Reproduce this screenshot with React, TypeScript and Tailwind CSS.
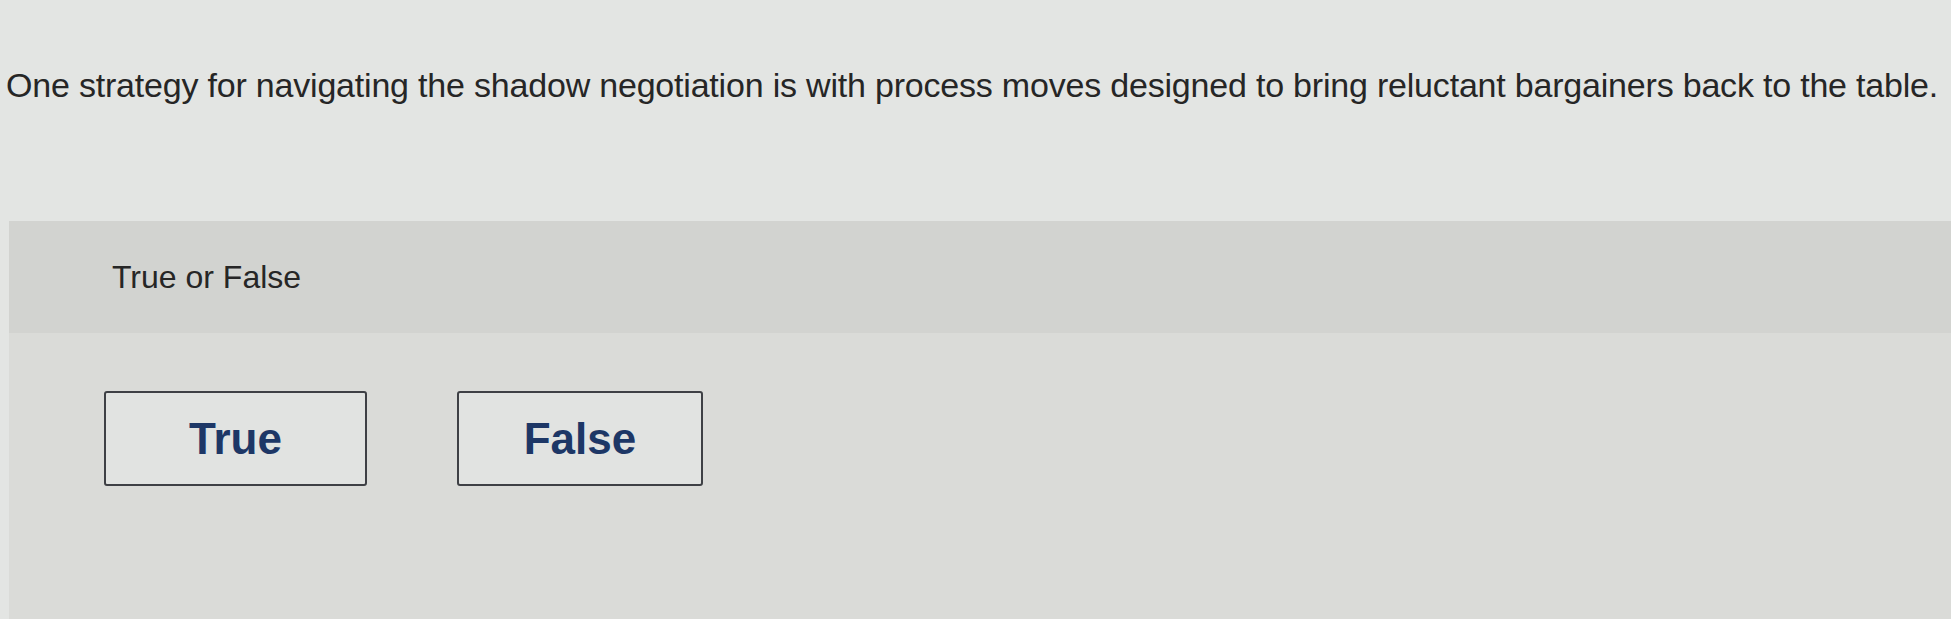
import React from 'react';

const choices = [
  { label: 'True', width: 'w-[263px]' },
  { label: 'False', width: 'w-[246px]' },
];

export default function App() {
  return (
    <div className="h-[619px] w-full overflow-hidden bg-[#e3e5e3] font-['Liberation_Sans',Arial,sans-serif] text-[#262626]">
      <p className="whitespace-nowrap pl-[6px] pt-[62px] text-[34px] leading-[46px] tracking-[-0.2px]">
        One strategy for navigating the shadow negotiation is with process moves designed to bring reluctant bargainers back to the table.
      </p>

      <section className="ml-[9px] mt-[113px] h-[400px] bg-[#dadbd8]">
        {/* question type header */}
        <div className="flex h-[112px] items-center bg-[#d2d3d0] pl-[103px]">
          <span className="text-[32px]">True or False</span>
        </div>

        <div className="flex gap-[90px] pl-[95px] pt-[58px]">
          {choices.map((c) => (
            <button
              key={c.label}
              className={`${c.width} h-[95px] rounded-[3px] border-2 border-[#3e4045] bg-[#e1e3e1] text-[44px] font-bold text-[#1d3766]`}
            >
              {c.label}
            </button>
          ))}
        </div>
      </section>
    </div>
  );
}
